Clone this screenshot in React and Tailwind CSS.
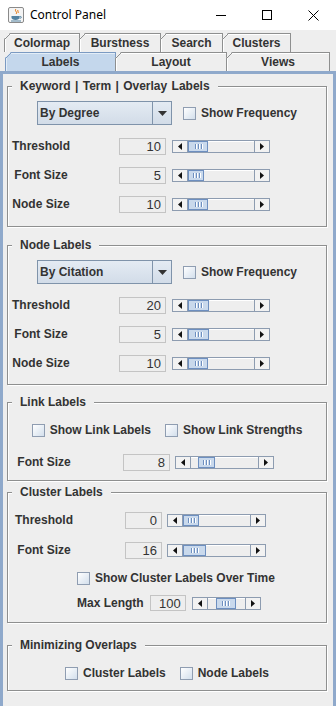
import React from "react";

const tabsTop = [
  { label: "Colormap", w: "w-[76px]" },
  { label: "Burstness", w: "w-[82px]" },
  { label: "Search", w: "w-[63px]" },
  { label: "Clusters", w: "w-[69px]" },
];

const tabsBottom = [
  { label: "Labels", w: "w-[111px]", selected: true },
  { label: "Layout", w: "w-[112px]" },
  { label: "Views", w: "w-[104px]" },
];

function Tab({ label, w, selected, first }) {
  return (
    <div
      className={`relative flex h-[19px] items-center justify-center border border-b-0 text-[12px] font-bold text-[#333] [clip-path:polygon(6px_0,100%_0,100%_100%,0_100%,0_6px)] ${w} ${
        first ? "" : "-ml-px"
      } ${
        selected
          ? "border-[#7b9ac2] bg-[#c4d7ec] shadow-[inset_1px_1px_0_#e3edf7]"
          : "border-[#8e8f8f] bg-[#eeeeee] shadow-[inset_1px_1px_0_#fff]"
      }`}
    >
      <svg className="absolute -left-px -top-px" width="8" height="8">
        <line x1="0.5" y1="6.5" x2="6.5" y2="0.5" stroke={selected ? "#7b9ac2" : "#8e8f8f"} />
      </svg>
      {label}
    </div>
  );
}

function Group({ title, className, titleClass = "", children }) {
  return (
    <div
      className={`ml-[4px] mr-[6px] border border-[#8e8f8f] shadow-[inset_1px_1px_0_#fff,1px_1px_0_#fff] ${className}`}
    >
      <div
        className={`-mt-[8px] ml-[4px] w-fit bg-[#eeeeee] px-[8px] text-[12px] font-bold leading-[15px] text-[#333] ${titleClass}`}
      >
        {title}
      </div>
      {children}
    </div>
  );
}

function Check() {
  return (
    <span className="inline-block h-[13px] w-[13px] shrink-0 border border-[#8f9db1] bg-[linear-gradient(135deg,#ffffff,#d3dfec)]" />
  );
}

function CheckItem({ label }) {
  return (
    <div className="flex items-center gap-[5px]">
      <Check />
      <span className="text-[12px] font-bold leading-[15px] text-[#333]">{label}</span>
    </div>
  );
}

function Combo({ value }) {
  return (
    <div className="flex h-[24px] w-[135px] border border-[#7f93aa] bg-[linear-gradient(#e4ebf3,#d2dce8)]">
      <div className="flex flex-1 items-center pl-[2px] text-[12px] font-bold text-[#333]">{value}</div>
      <div className="flex w-[19px] items-center justify-center border-l border-[#7f93aa]">
        <svg width="9" height="5">
          <path d="M0 0H9L4.5 5Z" fill="#333" />
        </svg>
      </div>
    </div>
  );
}

function Field({ value, w, h = "h-[17px]" }) {
  return (
    <div
      className={`flex items-center justify-end border border-[#c4c4c4] pr-[4px] text-[13px] leading-none text-[#333] ${w} ${h}`}
    >
      {value}
    </div>
  );
}

function Arrow({ dir }) {
  return (
    <div
      className={`flex w-[15px] items-center justify-center bg-[#f2f2f2] ${
        dir === "left" ? "border-r border-[#8d9cb0]" : "border-l border-[#8d9cb0]"
      }`}
    >
      <svg width="4" height="7">
        {dir === "left" ? <path d="M4 0V7L0 3.5Z" fill="#111" /> : <path d="M0 0V7L4 3.5Z" fill="#111" />}
      </svg>
    </div>
  );
}

function Scroll({ w, off, tw }) {
  return (
    <div className={`flex h-[13px] border border-[#8d9cb0] bg-[#eeeeee] ${w}`}>
      <Arrow dir="left" />
      <div className="flex flex-1 shadow-[inset_0_1px_0_#fff]">
        <div className={off} />
        <div
          className={`flex items-center justify-center gap-[1px] border border-[#6d8fc0] bg-[#c9d9ec] ${tw}`}
        >
          <span className="h-[5px] w-px bg-[#6d8fc0] shadow-[1px_0_0_#fff]" />
          <span className="ml-[1px] h-[5px] w-px bg-[#6d8fc0] shadow-[1px_0_0_#fff]" />
          <span className="ml-[1px] h-[5px] w-px bg-[#6d8fc0] shadow-[1px_0_0_#fff]" />
        </div>
      </div>
      <Arrow dir="right" />
    </div>
  );
}

function Label({ children, w }) {
  return (
    <div className={`text-center text-[12px] font-bold leading-[15px] text-[#333] ${w}`}>{children}</div>
  );
}

function SliderRow({ label, value, thumb, tw, className }) {
  return (
    <div className={`flex items-center ${className}`}>
      <Label w="w-[66px]">{label}</Label>
      <div className="ml-[45px]">
        <Field value={value} w="w-[47px]" />
      </div>
      <div className="ml-[6px]">
        <Scroll w="w-[98px]" off={thumb} tw={tw} />
      </div>
    </div>
  );
}

export default function App() {
  return (
    <div className="flex h-[706px] w-[336px] flex-col overflow-hidden bg-[#eeeeee] font-['Liberation_Sans',Arial,sans-serif]">
      {/* title bar */}
      <div className="flex h-[30px] shrink-0 items-center bg-white">
        <svg className="ml-[8px]" width="16" height="16" viewBox="0 0 16 16">
          <rect x="0.5" y="0.5" width="15" height="15" rx="1.5" fill="#f4f4f4" stroke="#8a8a8a" />
          <path d="M8 2c-2 2 2 3 0 5M10 3c-1 1 1 2 0 3" stroke="#e76f00" strokeWidth="1" fill="none" />
          <path d="M3.5 9h8v1.5c0 1.5-1.5 2.5-4 2.5s-4-1-4-2.5Z" fill="#5382a1" />
          <path d="M11.5 9.5h1.2c.8 0 .8 1.6 0 1.6h-1.2" stroke="#5382a1" fill="none" />
          <path d="M3 14h10" stroke="#5382a1" />
        </svg>
        <span className="ml-[6px] font-['Noto_Sans',sans-serif] text-[12px] text-black">Control Panel</span>
        <div className="ml-auto flex h-full">
          <div className="flex w-[46px] items-center justify-center">
            <span className="h-px w-[10px] bg-black" />
          </div>
          <div className="flex w-[46px] items-center justify-center">
            <span className="h-[10px] w-[10px] border border-black" />
          </div>
          <div className="flex w-[46px] items-center justify-center">
            <svg width="11" height="11">
              <path d="M0.5 0.5L10.5 10.5M10.5 0.5L0.5 10.5" stroke="#000" strokeWidth="1" />
            </svg>
          </div>
        </div>
      </div>

      {/* tabs */}
      <div className="mt-[3px] flex pl-[4px]">
        {tabsTop.map((t, i) => (
          <Tab key={t.label} {...t} first={i === 0} />
        ))}
      </div>
      <div className="flex pl-[5px]">
        {tabsBottom.map((t, i) => (
          <Tab key={t.label} {...t} first={i === 0} />
        ))}
      </div>

      {/* content */}
      <div className="flex flex-1 flex-col border-x-[3px] border-t-[3px] border-[#8fa9cb]">
        <Group
          title="Keyword | Term | Overlay Labels"
          titleClass="[word-spacing:1px]"
          className="mt-[12px] pb-[13px]"
        >
          <div className="mt-[7px] flex items-center">
            <div className="ml-[29px]">
              <Combo value="By Degree" />
            </div>
            <div className="ml-[11px]">
              <CheckItem label="Show Frequency" />
            </div>
          </div>
          <SliderRow label="Threshold" value="10" thumb="w-0" tw="w-[20px]" className="mt-[13px]" />
          <SliderRow label="Font Size" value="5" thumb="w-0" tw="w-[16px]" className="mt-[12px]" />
          <SliderRow label="Node Size" value="10" thumb="w-0" tw="w-[20px]" className="mt-[12px]" />
        </Group>

        <Group title="Node Labels" className="mt-[18px] pb-[12px]">
          <div className="mt-[7px] flex items-center">
            <div className="ml-[29px]">
              <Combo value="By Citation" />
            </div>
            <div className="ml-[11px]">
              <CheckItem label="Show Frequency" />
            </div>
          </div>
          <SliderRow label="Threshold" value="20" thumb="w-0" tw="w-[21px]" className="mt-[13px]" />
          <SliderRow label="Font Size" value="5" thumb="w-0" tw="w-[21px]" className="mt-[12px]" />
          <SliderRow label="Node Size" value="10" thumb="w-0" tw="w-[20px]" className="mt-[12px]" />
        </Group>

        <Group title="Link Labels" className="mt-[17px] pb-[9px]">
          <div className="mt-[13px] flex justify-center gap-[14px]">
            <CheckItem label="Show Link Labels" />
            <CheckItem label="Show Link Strengths" />
          </div>
          <div className="mt-[16px] flex items-center">
            <Label w="w-[72px]">Font Size</Label>
            <div className="ml-[43px]">
              <Field value="8" w="w-[47px]" />
            </div>
            <div className="ml-[5px]">
              <Scroll w="w-[99px]" off="w-[7px]" tw="w-[17px]" />
            </div>
          </div>
        </Group>

        <Group title="Cluster Labels" className="mt-[11px] pb-[11px]">
          <div className="mt-[12px] flex items-center">
            <Label w="w-[72px]">Threshold</Label>
            <div className="ml-[45px]">
              <Field value="0" w="w-[37px]" />
            </div>
            <div className="ml-[5px]">
              <Scroll w="w-[99px]" off="w-0" tw="w-[16px]" />
            </div>
          </div>
          <div className="mt-[13px] flex items-center">
            <Label w="w-[72px]">Font Size</Label>
            <div className="ml-[45px]">
              <Field value="16" w="w-[37px]" />
            </div>
            <div className="ml-[5px]">
              <Scroll w="w-[99px]" off="w-0" tw="w-[23px]" />
            </div>
          </div>
          <div className="ml-[69px] mt-[12px] flex">
            <CheckItem label="Show Cluster Labels Over Time" />
          </div>
          <div className="ml-[69px] mt-[9px] flex items-center">
            <span className="text-[12px] font-bold leading-[15px] text-[#333]">Max Length</span>
            <div className="ml-[6px]">
              <Field value="100" w="w-[36px]" h="h-[16px]" />
            </div>
            <div className="ml-[6px]">
              <Scroll w="w-[69px]" off="w-[8px]" tw="w-[20px]" />
            </div>
          </div>
        </Group>

        <Group title="Minimizing Overlaps" className="mt-[22px] pb-[9px]">
          <div className="mt-[13px] flex justify-center gap-[14px]">
            <CheckItem label="Cluster Labels" />
            <CheckItem label="Node Labels" />
          </div>
        </Group>
      </div>
    </div>
  );
}
